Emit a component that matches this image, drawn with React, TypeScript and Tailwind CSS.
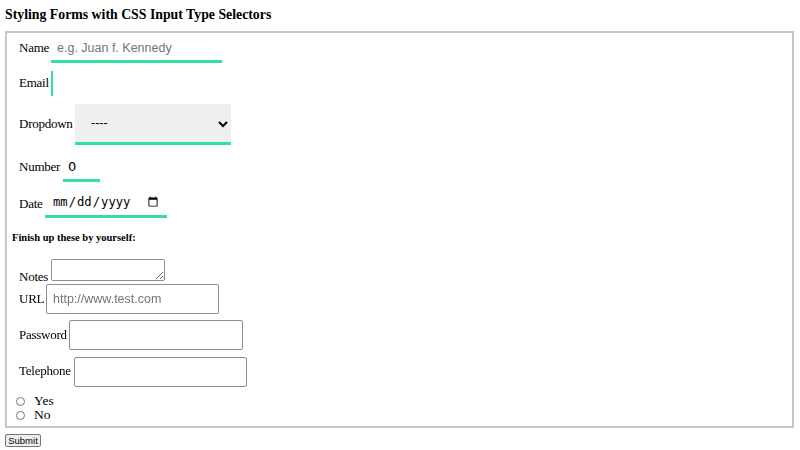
import React from 'react';

/**
 * Form demo: CSS input type selectors
 */
export default function App() {
  const label = "mb-[2px] text-[13px] leading-[15px] tracking-[-0.25px] text-black";
  const boxed =
    "h-[30px] w-[173px] rounded-[2px] border border-[#8f8f8f] bg-white px-[6px] font-['Liberation_Sans',Arial,sans-serif] text-[12.5px] placeholder:text-[#757575] outline-none";

  return (
    <div className="min-h-[450px] w-[800px] bg-white px-[5px] pt-[7px] font-['Liberation_Serif','Times_New_Roman',serif] text-black">
      <h4 className="text-[13.8px] font-bold leading-[16px]">
        Styling Forms with CSS Input Type Selectors
      </h4>

      <form onSubmit={(e) => e.preventDefault()}>
        <div className="mt-[8px] w-[789px] border-2 border-[#c6c6c6] pb-[4px] pl-[12px] pt-[2px]">
          {/* Name */}
          <div className="flex h-[28px] items-center">
            <label className={`${label} !mb-[4px] w-[32px]`}>Name</label>
            <input
              type="text"
              placeholder="e.g. Juan f. Kennedy"
              className="h-[28px] w-[171px] border-b-[3px] border-[#33e0a0] bg-white px-[6px] font-['Liberation_Sans',Arial,sans-serif] text-[12.5px] placeholder:text-[#757575] outline-none"
            />
          </div>

          {/* Email */}
          <div className="mt-[8px] flex h-[25px] items-center">
            <label className={`${label} w-[32px]`}>Email</label>
            <input
              type="email"
              className="h-[25px] w-[2px] border-l-2 border-[#33e0a0] p-0 outline-none"
            />
          </div>

          {/* Dropdown */}
          <div className="mt-[8px] flex h-[41px] items-center">
            <label className={`${label} w-[56px]`}>Dropdown</label>
            <select className="h-[41px] w-[156px] border-b-[3px] border-[#33e0a0] bg-[#efefef] pl-[12px] pr-0 font-['Liberation_Sans',Arial,sans-serif] text-[12.5px] outline-none">
              <option>----</option>
              <option>One</option>
              <option>Two</option>
            </select>
          </div>

          {/* Number */}
          <div className="mt-[8px] flex h-[29px] items-center">
            <label className={`${label} w-[44px]`}>Number</label>
            <input
              type="number"
              defaultValue={0}
              className="h-[29px] w-[37px] border-b-[3px] border-[#33e0a0] bg-white px-[5px] font-['DejaVu_Sans',sans-serif] text-[13px] outline-none"
            />
          </div>

          {/* Date */}
          <div className="mt-[8px] flex h-[28px] items-center">
            <label className={`${label} w-[26px]`}>Date</label>
            <input
              type="date"
              className="h-[28px] w-[122px] border-b-[3px] border-[#33e0a0] bg-white pl-[7px] pr-[6px] font-['DejaVu_Sans_Mono',monospace] text-[12.2px] outline-none"
            />
          </div>

          <h5 className="-ml-[7px] mt-[13px] text-[10.5px] font-bold leading-[14px]">
            Finish up these by yourself:
          </h5>

          {/* Notes */}
          <div className="mt-[14px] flex h-[22px] items-end">
            <label className={`${label} !-mb-[3px] w-[32px]`}>Notes</label>
            <textarea className="h-[22px] w-[114px] rounded-[2px] border border-[#8f8f8f] bg-white outline-none" />
          </div>

          {/* URL */}
          <div className="mt-[3px] flex h-[30px] items-center">
            <label className={`${label} w-[27px]`}>URL</label>
            <input type="url" placeholder="http://www.test.com" className={boxed} />
          </div>

          {/* Password */}
          <div className="mt-[6px] flex h-[30px] items-center">
            <label className={`${label} w-[50px]`}>Password</label>
            <input type="password" className={`${boxed} w-[174px]`} />
          </div>

          {/* Telephone */}
          <div className="mt-[7px] flex h-[30px] items-center">
            <label className={`${label} !mb-[3px] w-[55px]`}>Telephone</label>
            <input type="tel" className={boxed} />
          </div>

          {/* Radios */}
          <div className="mt-[7px] -ml-[3px]">
            <label className="flex h-[14px] items-center text-[13.5px] leading-[14px]">
              <input type="radio" name="yn" className="m-0 h-[9px] w-[9px]" />
              <span className="ml-[9px]">Yes</span>
            </label>
            <label className="flex h-[14px] items-center text-[13.5px] leading-[14px]">
              <input type="radio" name="yn" className="m-0 h-[9px] w-[9px]" />
              <span className="ml-[9px]">No</span>
            </label>
          </div>
        </div>

        <button
          type="submit"
          className="mt-[6px] flex h-[13px] w-[36px] items-center justify-center rounded-[2px] border border-[#767676] bg-[#efefef] font-['Liberation_Sans',Arial,sans-serif] text-[9.5px] leading-none"
        >
          Submit
        </button>
      </form>
    </div>
  );
}
